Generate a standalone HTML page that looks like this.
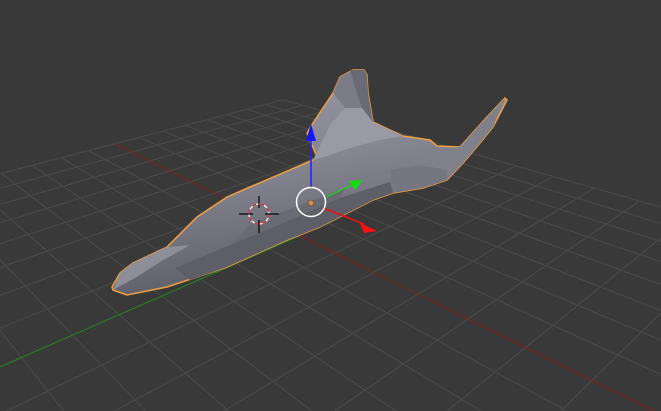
<!DOCTYPE html>
<html><head><meta charset="utf-8"><style>
html,body{margin:0;padding:0;background:#393939;width:661px;height:411px;overflow:hidden}
svg{display:block}
</style></head><body>
<svg id="s" width="661" height="411" viewBox="0 0 661 411" xmlns="http://www.w3.org/2000/svg">
<rect width="661" height="411" fill="#393939"/>
<g id="grid" stroke="#4b4b4b" stroke-width="1" fill="none"></g>
<g id="axes"></g>
<defs>
<linearGradient id="body" x1="0" y1="0" x2="0.3" y2="1">
<stop offset="0" stop-color="#9c9ca8"/><stop offset="0.5" stop-color="#868692"/><stop offset="1" stop-color="#5c5c66"/>
</linearGradient>
</defs>
<path d="M112,287 L120,273 L133,263 L167,247 L197,217 L227,197 L250,187 L313,160 L317,157 L307,133 L313,123 L333,93 L340,77 L353,70 L364,70 L367,75 L368,93 L373,122 L390,130 L403,136 L430,140 L437,146 L460,147 L487,117 L505,98 L507,100 L493,127 L480,143 L463,163 L447,180 L423,188 L393,193 L373,200 L320,227 L287,240 L227,267 L167,287 L127,295 L113,290 Z" fill="url(#body)" stroke="#f0a040" stroke-width="1.5"/>
<path d="M313,160 L318,150 L330,125 L345,108 L368,108 L373,122 L390,130 L403,136 L380,140 L350,148 L330,155 Z" fill="#9a9aa6"/>
<path d="M333,93 L340,77 L353,70 L364,70 L367,75 L368,93 L362,108 L345,108 Z" fill="#7c7c88"/>
<path d="M350,70 L364,70 L367,75 L368,93 L373,122 L362,108 L356,90 Z" fill="#6a6a76"/>
<path d="M405,160 L440,148 L460,147 L487,117 L505,98 L493,127 L480,143 L463,163 L447,180 L423,188 L400,190 Z" fill="#80808a"/>
<path d="M390,170 L420,165 L447,170 L447,180 L423,188 L393,193 Z" fill="#767680"/>
<path d="M175,268 L230,245 L290,220 L340,198 L390,182 L393,193 L373,200 L320,227 L287,240 L227,267 L190,280 Z" fill="#5e5e68"/>
<path d="M230,245 L290,220 L340,198 L345,188 L300,205 L250,225 Z" fill="#6a6a74"/>
<path d="M120,273 L133,263 L167,247 L190,245 L160,262 L135,278 L113,290 Z" fill="#8e8e98"/>
<circle cx="259" cy="214" r="10" fill="none" stroke="#ffffff" stroke-width="1.3"/>
<circle cx="259" cy="214" r="10" fill="none" stroke="#e02020" stroke-width="1.3" stroke-dasharray="4 4"/>
<g stroke="#000" stroke-width="1.2">
<line x1="239" y1="214" x2="253" y2="214"/><line x1="265" y1="214" x2="279" y2="214"/>
<line x1="259" y1="196" x2="259" y2="208"/><line x1="259" y1="220" x2="259" y2="233"/>
</g>
<line x1="311" y1="188" x2="311" y2="138" stroke="#2020ff" stroke-width="1.5"/>
<polygon points="311,124 306,141 316,141" fill="#1414ff"/>
<line x1="326" y1="197" x2="354" y2="184" stroke="#22cc22" stroke-width="1.5"/>
<polygon points="363,180 349,181 355,190" fill="#11dd11"/>
<line x1="323" y1="208" x2="364" y2="224" stroke="#ee1111" stroke-width="1.5"/>
<polygon points="377,231 360,223 364,233" fill="#ff1010"/>
<circle cx="311" cy="202" r="14.5" fill="none" stroke="#fff" stroke-width="1.5"/>
<circle cx="311" cy="203" r="3" fill="#d09050" stroke="#5a3a20" stroke-width="0.6"/>
</svg>
<script>
(function(){
var Vx=[-318,-71],Vy=[1092,-111],O=[300,235.6],k=18.7,m=26.9,R=8;
function px(X){var f=k/(k-X);return [Vx[0]+(O[0]-Vx[0])*f,Vx[1]+(O[1]-Vx[1])*f];}
function py(Y){var f=m/(m+Y);return [Vy[0]+(O[0]-Vy[0])*f,Vy[1]+(O[1]-Vy[1])*f];}
function inter(a,b,c,d){var x1=a[0],y1=a[1],x2=b[0],y2=b[1],x3=c[0],y3=c[1],x4=d[0],y4=d[1];
var den=(x1-x2)*(y3-y4)-(y1-y2)*(x3-x4);var t=((x1-x3)*(y3-y4)-(y1-y3)*(x3-x4))/den;return [x1+t*(x2-x1),y1+t*(y2-y1)];}
function P(X,Y){return inter(Vy,px(X),Vx,py(Y));}
function L(a,b,extra){return '<line x1="'+a[0].toFixed(1)+'" y1="'+a[1].toFixed(1)+'" x2="'+b[0].toFixed(1)+'" y2="'+b[1].toFixed(1)+'"'+(extra||'')+'/>';}
var s='';
for(var n=-R;n<=R;n++){if(n==0)continue;s+=L(P(n,-R),P(n,R));s+=L(P(-R,n),P(R,n));}
document.getElementById('grid').innerHTML=s;
document.getElementById('axes').innerHTML=L(P(-R,0),P(R,0),' stroke="#8a1c1c" stroke-width="1"')+L(P(0,-R),P(0,0),' stroke="#1f8a1f" stroke-width="1"');
})();
</script>
</body></html>
